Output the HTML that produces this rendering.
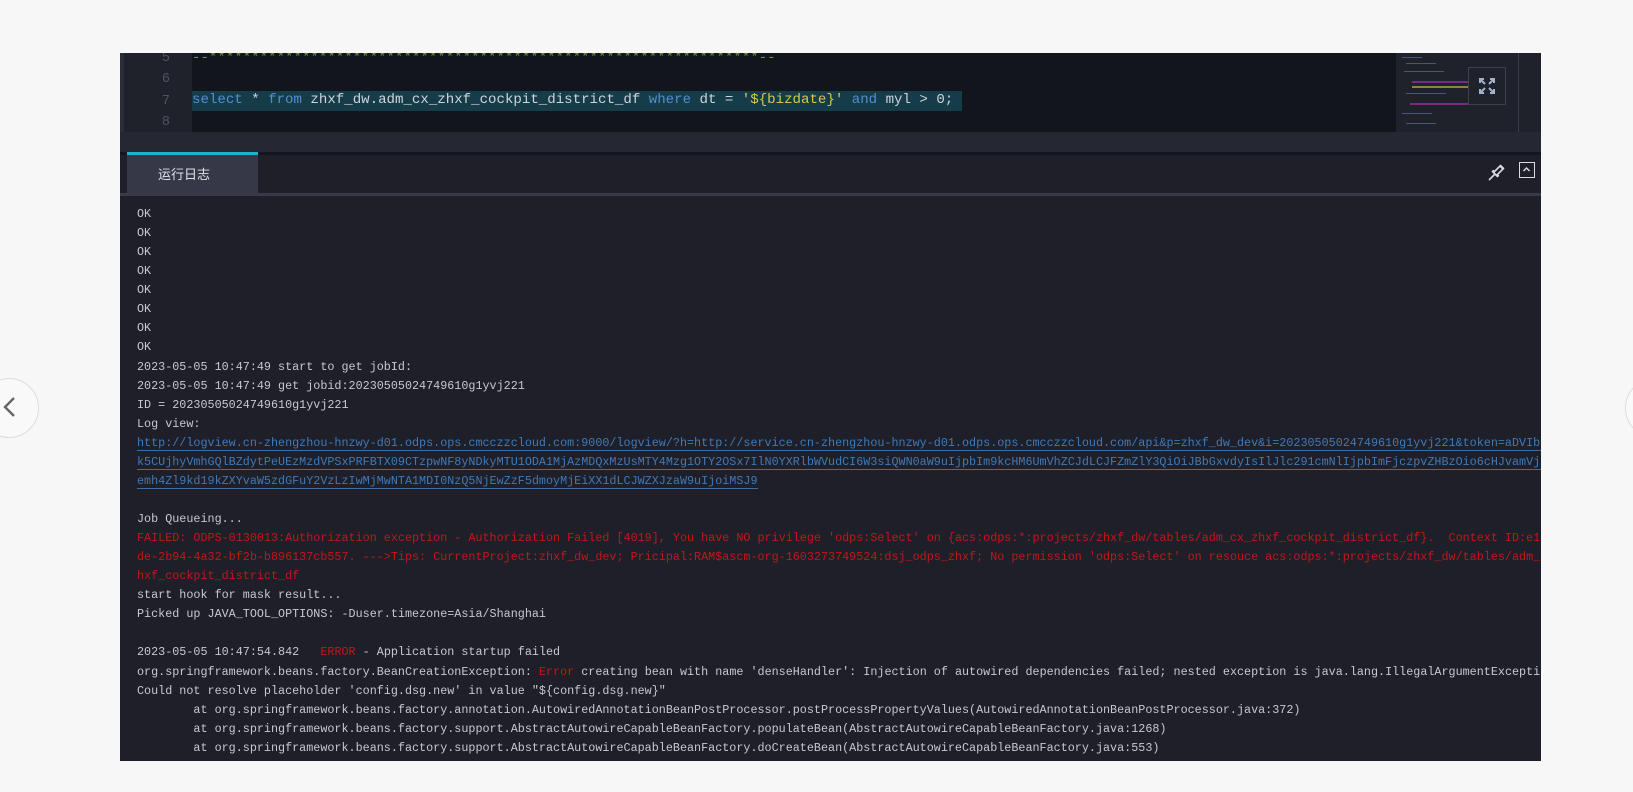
<!DOCTYPE html>
<html><head><meta charset="utf-8"><style>
body{margin:0;width:1633px;height:792px;background:#f7f7f7;position:relative;overflow:hidden;font-family:"Liberation Mono",monospace}
.panel{position:absolute;left:120px;top:53px;width:1421px;height:708px;background:#1e1f29;overflow:hidden}
.ed{position:absolute;left:0;top:0;width:1421px;height:79px;background:#1f212b}
.code{position:absolute;left:72px;top:0;width:1204px;height:79px;background:#13151c}
.ln{position:absolute;left:30px;width:20px;text-align:right;color:#4f5463;font-size:13.5px}
.cl{position:absolute;left:72px;font-size:14.1px;white-space:pre;color:#d0d3da}
.mini{position:absolute;left:1278px;top:0;width:118px;height:79px}
.gap{position:absolute;left:0;top:79px;width:1421px;height:20px;background:#252733}
.tabbar{position:absolute;left:0;top:99px;width:1421px;height:41px;background:#1e1f29;border-top:3px solid #15161d}
.tab{position:absolute;left:7px;top:-3px;width:131px;height:41px;background:#363848;border-top:3px solid #1bb3d1;color:#e0e2e8;font:13px "Liberation Sans","Noto Sans CJK SC",sans-serif;box-sizing:border-box;padding:9px 0 0 31px}
.sep{position:absolute;left:0;top:140px;width:1421px;height:3px;background:#383a4a}
.log{position:absolute;left:17px;top:152px;font-size:11.75px;line-height:19.06px;color:#c6c9d0;white-space:pre}
.r{color:#c21818}.l{color:#3f7ab8;border-bottom:1px solid #3a6ea5}
</style></head><body>
<div class="panel">
 <div class="ed"></div>
 <div class="code"></div>
 <div style="position:absolute;left:0;top:0;width:4px;height:79px;background:#2a2c38"></div>
 <div class="ln" style="top:-2px">5</div><div class="ln" style="top:19px">6</div><div class="ln" style="top:41px">7</div><div class="ln" style="top:62px">8</div>
 <div class="cl" style="top:-3px;color:#6a9a3a">--*****************************************************************--</div>
 <div style="position:absolute;left:72px;top:38px;width:770px;height:20px;background:#163c4a"></div>
 <div class="cl" style="top:39px"><span style="color:#4f8fd0">select</span> * <span style="color:#4f8fd0">from</span> zhxf_dw.adm_cx_zhxf_cockpit_district_df <span style="color:#4f8fd0">where</span> dt = <span style="color:#d8c84a">'${bizdate}'</span> <span style="color:#4f8fd0">and</span> myl &gt; 0;</div>
 <div class="mini"><svg width="118" height="79"><g fill="#5a6a9a" opacity=".7"><rect x="4" y="4" width="20" height="1"/><rect x="8" y="10" width="30" height="1"/><rect x="6" y="18" width="40" height="1"/><rect x="14" y="28" width="60" height="2" fill="#a030a0"/><rect x="14" y="33" width="70" height="2" fill="#c0b040"/><rect x="8" y="40" width="40" height="1"/><rect x="12" y="50" width="80" height="2" fill="#a030a0"/><rect x="4" y="60" width="30" height="1"/><rect x="8" y="70" width="30" height="1"/></g></svg></div>
 <div style="position:absolute;left:1398px;top:0;width:1px;height:79px;background:#3a3c48"></div>
 <div style="position:absolute;left:1348px;top:14px;width:38px;height:38px;border:1px solid #3c3f50;box-sizing:border-box;background:#1f212b"><svg width="36" height="36" viewBox="0 0 36 36" fill="none" stroke="#9fb4cc" stroke-width="2"><path d="M11 15V11h4M11 11l5 5M25 15V11h-4M25 11l-5 5M11 21v4h4M11 25l5-5M25 21v4h-4M25 25l-5-5"/></svg></div>
 <div class="gap"></div>
 <div class="tabbar"><div class="tab">运行日志</div>
  <svg style="position:absolute;left:1366px;top:6px" width="22" height="22" viewBox="0 0 22 22" fill="none" stroke="#d8dbe2" stroke-width="1.6"><path d="M3 19l6-6M6 10l6 6M8 11l6-6 3 3-6 6M7 9l2 5M13 15l-5-2M14 4l4 4"/></svg>
  <div style="position:absolute;left:1399px;top:7px;width:16px;height:16px;border:1.5px solid #d8dbe2;box-sizing:border-box"><svg width="13" height="13" viewBox="0 0 13 13" fill="none" stroke="#d8dbe2" stroke-width="1.5"><path d="M3.5 8L6.5 5l3 3"/></svg></div>
 </div>
 <div class="sep"></div>
<div class="log">OK
OK
OK
OK
OK
OK
OK
OK
2023-05-05 10:47:49 start to get jobId:
2023-05-05 10:47:49 get jobid:20230505024749610g1yvj221
ID = 20230505024749610g1yvj221
Log view:
<span class="l">http://logview.cn-zhengzhou-hnzwy-d01.odps.ops.cmcczzcloud.com:9000/logview/?h=http://service.cn-zhengzhou-hnzwy-d01.odps.ops.cmcczzcloud.com/api&amp;p=zhxf_dw_dev&amp;i=20230505024749610g1yvj221&amp;token=aDVIbzRlbXhL</span>
<span class="l">k5CUjhyVmhGQlBZdytPeUEzMzdVPSxPRFBTX09CTzpwNF8yNDkyMTU1ODA1MjAzMDQxMzUsMTY4Mzg1OTY2OSx7IlN0YXRlbWVudCI6W3siQWN0aW9uIjpbIm9kcHM6UmVhZCJdLCJFZmZlY3QiOiJBbGxvdyIsIlJlc291cmNlIjpbImFjczpvZHBzOio6cHJvamVjdHMv</span>
<span class="l">emh4Zl9kd19kZXYvaW5zdGFuY2VzLzIwMjMwNTA1MDI0NzQ5NjEwZzF5dmoyMjEiXX1dLCJWZXJzaW9uIjoiMSJ9</span>

Job Queueing...
<span class="r">FAILED: ODPS-0130013:Authorization exception - Authorization Failed [4019], You have NO privilege 'odps:Select' on {acs:odps:*:projects/zhxf_dw/tables/adm_cx_zhxf_cockpit_district_df}.  Context ID:e1f9a2</span>
<span class="r">de-2b94-4a32-bf2b-b896137cb557. ---&gt;Tips: CurrentProject:zhxf_dw_dev; Pricipal:RAM$ascm-org-1603273749524:dsj_odps_zhxf; No permission 'odps:Select' on resouce acs:odps:*:projects/zhxf_dw/tables/adm_cx_z</span>
<span class="r">hxf_cockpit_district_df</span>
start hook for mask result...
Picked up JAVA_TOOL_OPTIONS: -Duser.timezone=Asia/Shanghai

2023-05-05 10:47:54.842   <span class="r">ERROR</span> - Application startup failed
org.springframework.beans.factory.BeanCreationException: <span class="r">Error</span> creating bean with name 'denseHandler': Injection of autowired dependencies failed; nested exception is java.lang.IllegalArgumentException:
Could not resolve placeholder 'config.dsg.new' in value "${config.dsg.new}"
        at org.springframework.beans.factory.annotation.AutowiredAnnotationBeanPostProcessor.postProcessPropertyValues(AutowiredAnnotationBeanPostProcessor.java:372)
        at org.springframework.beans.factory.support.AbstractAutowireCapableBeanFactory.populateBean(AbstractAutowireCapableBeanFactory.java:1268)
        at org.springframework.beans.factory.support.AbstractAutowireCapableBeanFactory.doCreateBean(AbstractAutowireCapableBeanFactory.java:553)
        at org.springframework.beans.factory.support.AbstractAutowireCapableBeanFactory.createBean(AbstractAutowireCapableBeanFactory.java:483)</div>
</div>
<div style="position:absolute;left:-21px;top:378px;width:58px;height:58px;border:1px solid #dcdcdc;border-radius:50%;background:#f9f9f9"></div>
<svg style="position:absolute;left:0;top:395px" width="20" height="24" viewBox="0 0 20 24" fill="none" stroke="#666" stroke-width="2.4"><path d="M14 3L5 12l9 9"/></svg>
<div style="position:absolute;left:1625px;top:378px;width:58px;height:58px;border:1px solid #dcdcdc;border-radius:50%;background:#f9f9f9"></div>
</body></html>
